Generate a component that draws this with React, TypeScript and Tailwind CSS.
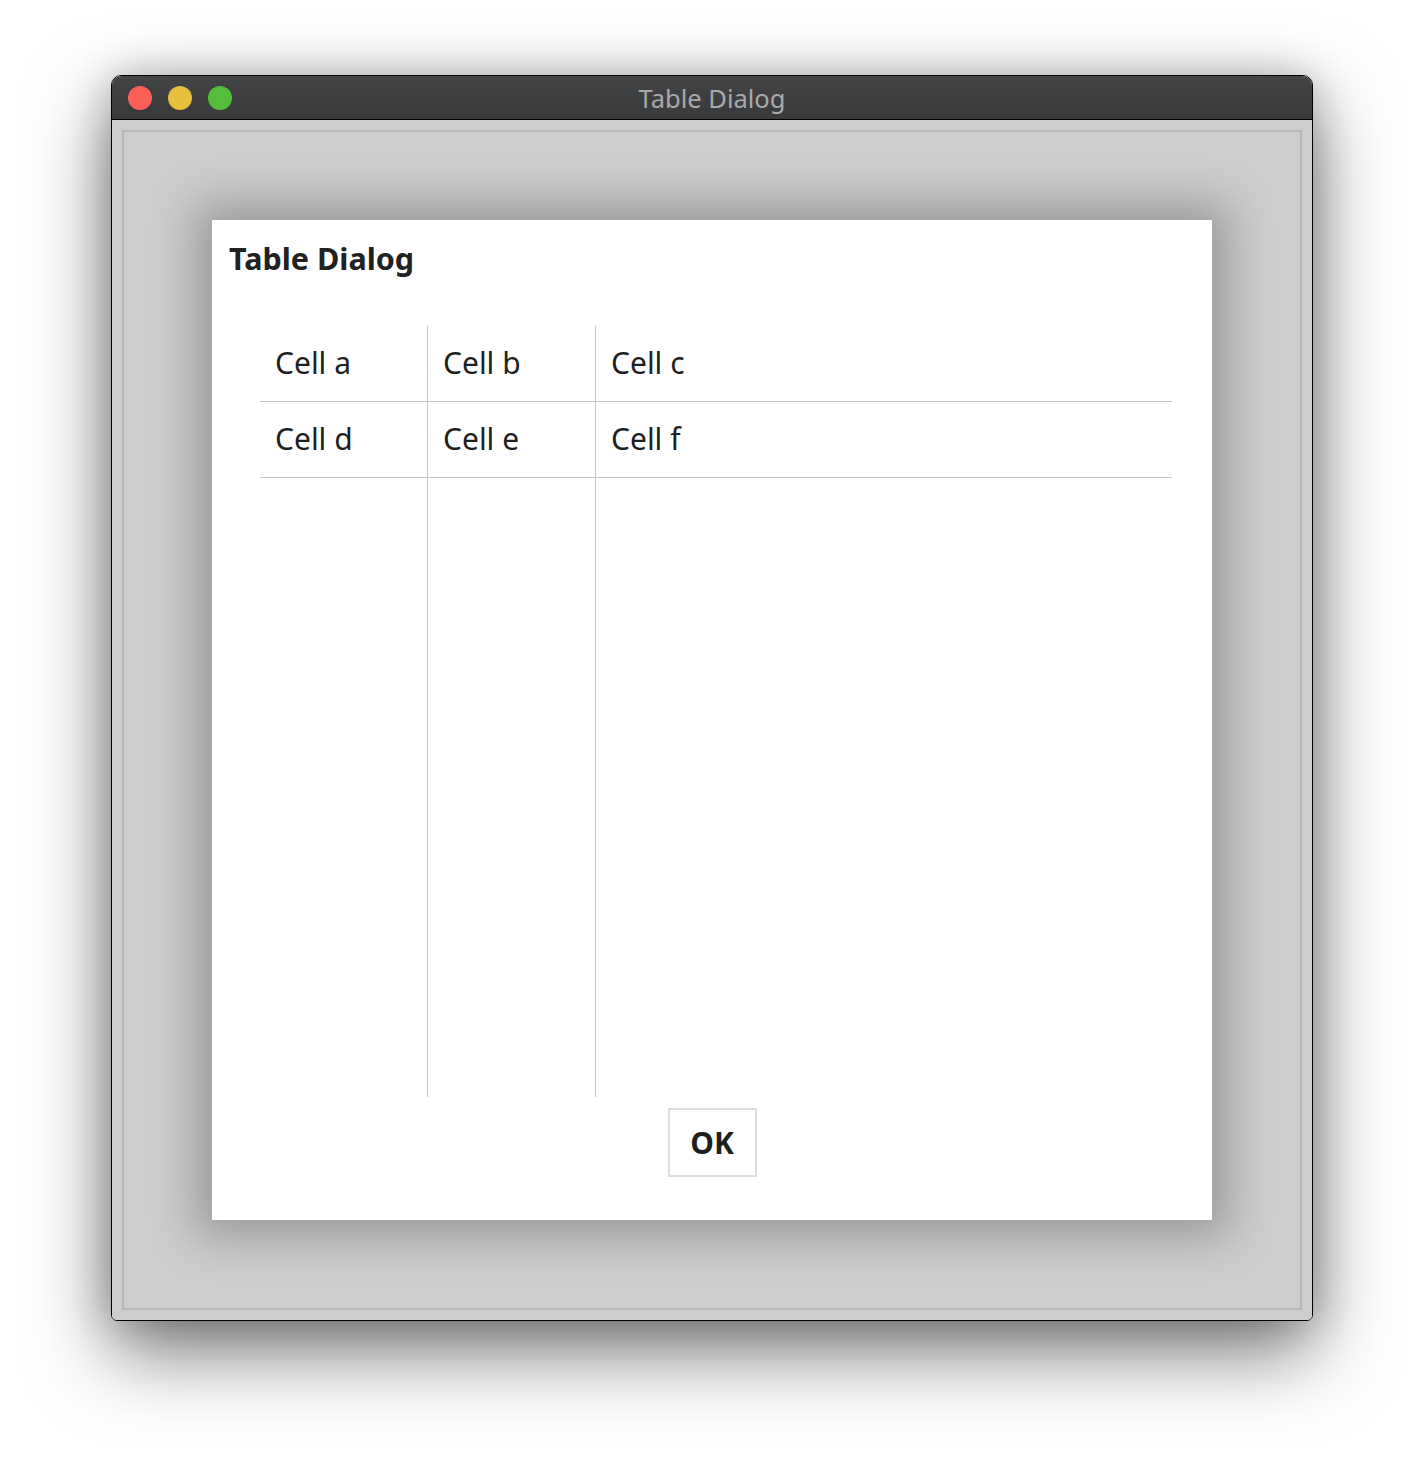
import React from 'react';

const rows = [
  ['Cell a', 'Cell b', 'Cell c'],
  ['Cell d', 'Cell e', 'Cell f'],
];

const TrafficLights = () => (
  <div className="flex items-center gap-[16px] pl-[16px]">
    <span className="w-[24px] h-[24px] rounded-full bg-[#fe5f57]" />
    <span className="w-[24px] h-[24px] rounded-full bg-[#e6bf3c]" />
    <span className="w-[24px] h-[24px] rounded-full bg-[#54be3b]" />
  </div>
);

const DataTable = () => (
  <div className="flex-1 flex flex-col ml-[48px] mr-[40px] mt-[48px]">
    {rows.map((row, i) => (
      <div key={i} className="flex h-[76px] border-b border-[#c4c4c4]">
        {row.map((cell, j) => (
          <div
            key={j}
            className={`flex items-center pl-[15px] pb-[3px] text-[30px] text-[#1f1f1f] ${
              j < 2 ? 'w-[168px] border-r border-[#c4c4c4]' : 'flex-1'
            }`}
          >
            {cell}
          </div>
        ))}
      </div>
    ))}
    {/* empty area, column rules keep going */}
    <div className="flex flex-1">
      <div className="w-[168px] border-r border-[#c4c4c4]" />
      <div className="w-[168px] border-r border-[#c4c4c4]" />
      <div className="flex-1" />
    </div>
  </div>
);

export default function App() {
  return (
    <div
      className="w-[1424px] h-[1468px] bg-white pt-[75px] pl-[111px]"
      style={{ fontFamily: '"Noto Sans", "Open Sans", sans-serif' }}
    >
      <div className="w-[1202px] h-[1246px] flex flex-col rounded-t-[10px] rounded-b-[6px] border border-black overflow-hidden shadow-[0_30px_80px_rgba(0,0,0,0.55),0_0_40px_rgba(0,0,0,0.2)]">
        {/* title bar */}
        <div className="relative h-[44px] flex items-center bg-gradient-to-b from-[#434446] to-[#38393b] border-b border-black">
          <TrafficLights />
          <div className="absolute inset-0 flex items-center justify-center text-[25.5px] text-[#a9a9aa] pt-[2px]">
            Table Dialog
          </div>
        </div>

        {/* window body */}
        <div className="flex-1 bg-[#cdcdcd] p-[10px]">
          <div className="h-full border-2 border-[#b9b9b9] flex items-center justify-center">
            <div className="w-[1000px] h-[1000px] bg-white flex flex-col shadow-[0_0_40px_16px_rgba(0,0,0,0.25)]">
              <div className="pl-[17px] pt-[18px] text-[30.5px] font-bold text-[#212121] leading-[40px]">
                Table Dialog
              </div>
              <DataTable />
              <div className="flex justify-center pt-[11px] pb-[43px]">
                <button className="w-[89px] h-[69px] bg-white border-2 border-[#dedede] text-[30px] font-bold text-[#1f1f1f]">
                  OK
                </button>
              </div>
            </div>
          </div>
        </div>
      </div>
    </div>
  );
}
